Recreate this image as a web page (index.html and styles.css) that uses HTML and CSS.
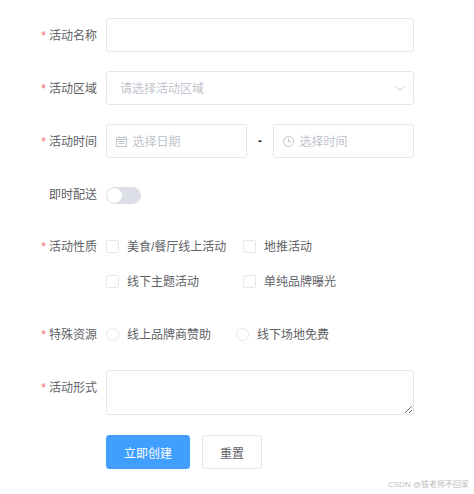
FILE: index.html
```html
<!DOCTYPE html>
<html lang="zh-CN">
<head>
    <meta charset="UTF-8">
    <title>活动表单</title>
    <link rel="stylesheet" href="styles.css">
</head>
<body>
<form class="form">
    <div class="row">
        <label class="label required">活动名称</label>
        <div class="field"><input class="input" type="text"></div>
    </div>
    <div class="row">
        <label class="label required">活动区域</label>
        <div class="field">
            <div class="input select">
                <span class="placeholder">请选择活动区域</span>
                <svg class="arrow" width="10" height="10" viewBox="0 0 10 10"><path d="M.5 3 5 7.5 9.5 3" fill="none" stroke="#c0c4cc" stroke-width="1"/></svg>
            </div>
        </div>
    </div>
    <div class="row">
        <label class="label required">活动时间</label>
        <div class="field split">
            <div class="input picker">
                <svg width="11" height="11" viewBox="0 0 11 11"><path d="M.5 1.5h10v9H.5zM.5 3.5h10M2.5 5.5h6M2.5 7.5h6M3 0v1.5M8 0v1.5" fill="none" stroke="#c0c4cc"/></svg>
                <span class="placeholder">选择日期</span>
            </div>
            <span class="dash">-</span>
            <div class="input picker">
                <svg width="11" height="11" viewBox="0 0 11 11"><circle cx="5.5" cy="5.5" r="5" fill="none" stroke="#c0c4cc"/><path d="M5.5 2.5v3.2h2.6" fill="none" stroke="#c0c4cc"/></svg>
                <span class="placeholder">选择时间</span>
            </div>
        </div>
    </div>
    <div class="row short">
        <label class="label">即时配送</label>
        <div class="field center"><span class="switch"><i></i></span></div>
    </div>
    <div class="row">
        <label class="label required">活动性质</label>
        <div class="field checks">
            <span class="option"><i class="check"></i><span>美食/餐厅线上活动</span></span>
            <span class="option"><i class="check"></i><span>地推活动</span></span>
            <span class="option"><i class="check"></i><span>线下主题活动</span></span>
            <span class="option"><i class="check"></i><span>单纯品牌曝光</span></span>
        </div>
    </div>
    <div class="row">
        <label class="label required">特殊资源</label>
        <div class="field radios">
            <span class="option"><i class="radio"></i><span>线上品牌商赞助</span></span>
            <span class="option"><i class="radio"></i><span>线下场地免费</span></span>
        </div>
    </div>
    <div class="row">
        <label class="label required">活动形式</label>
        <div class="field"><textarea class="textarea"></textarea></div>
    </div>
    <div class="row">
        <div class="label"></div>
        <div class="field buttons">
            <button class="btn primary" type="button">立即创建</button>
            <button class="btn" type="button">重置</button>
        </div>
    </div>
</form>
<div class="mark">CSDN @铁老师不回家</div>
</body>
</html>
```

FILE: styles.css
```css
*{
    margin: 0;
    padding: 0;
    box-sizing: border-box;
    font-family: "Liberation Sans", "Noto Sans CJK SC", sans-serif;
    font-size: 12px;
}

body{
    background: #fff;
    color: #606266;
}

.form{
    display: flex;
    flex-direction: column;
    gap: 19px;
    padding-top: 18px;
    width: 414px;
}

.row{
    display: flex;
}
.short{
    height: 33px;
}
.label{
    width: 106px;
    height: 34px;
    flex-shrink: 0;
    padding-right: 9px;
    line-height: 36px;
    text-align: right;
}
.required:before{
    content: "*";
    margin-right: 3px;
    color: #f56c6c;
}
.field{
    flex: 1;
    min-height: 33px;
}
.center{
    display: flex;
    align-items: center;
    padding-top: 3px;
}

.input{
    display: block;
    width: 100%;
    height: 34px;
    border: 1px solid #e4e7ed;
    border-radius: 3px;
    background: #fff;
    outline: none;
}
.placeholder{
    padding-bottom: 2px;
    color: #c0c4cc;
}
.select{
    display: flex;
    align-items: center;
    justify-content: space-between;
    padding: 0 8px 0 13px;
}
.split{
    display: flex;
    align-items: center;
}
.picker{
    display: flex;
    align-items: center;
    gap: 5.5px;
    padding-left: 9px;
    width: 141px;
}
.dash{
    width: 26px;
    text-align: center;
    color: #303133;
    font-weight: bold;
}

.switch{
    position: relative;
    display: block;
    width: 35px;
    height: 17px;
    border-radius: 9px;
    background: #dcdfe6;
}
.switch i{
    position: absolute;
    left: 1px;
    top: 1px;
    width: 15px;
    height: 15px;
    border-radius: 50%;
    background: #fff;
}

.checks{
    display: grid;
    grid-template-columns: 137px auto;
    grid-template-rows: 35px 34px;
    align-items: center;
}
.radios{
    display: flex;
    align-items: center;
    gap: 25px;
}
.option{
    display: flex;
    align-items: center;
}
.option span{
    padding-bottom: 2px;
}
.check,.radio{
    width: 13px;
    height: 13px;
    border: 1px solid #e4e7ed;
    background: #fff;
    margin-right: 8px;
}
.check{
    border-radius: 2px;
}
.radio{
    border-radius: 50%;
}

.textarea{
    display: block;
    width: 100%;
    height: 45px;
    border: 1px solid #e4e7ed;
    border-radius: 3px;
    outline: none;
}

.buttons{
    display: flex;
    gap: 12px;
    margin-top: 1px;
}
.btn{
    width: 60px;
    height: 34px;
    border: 1px solid #e4e7ed;
    border-radius: 3px;
    background: #fff;
    color: #606266;
}
.primary{
    width: 84px;
    border-color: #409eff;
    background: #409eff;
    color: #fff;
}

.mark{
    position: absolute;
    right: 5px;
    top: 478px;
    font-size: 8px;
    color: #bcbcbc;
}
```
